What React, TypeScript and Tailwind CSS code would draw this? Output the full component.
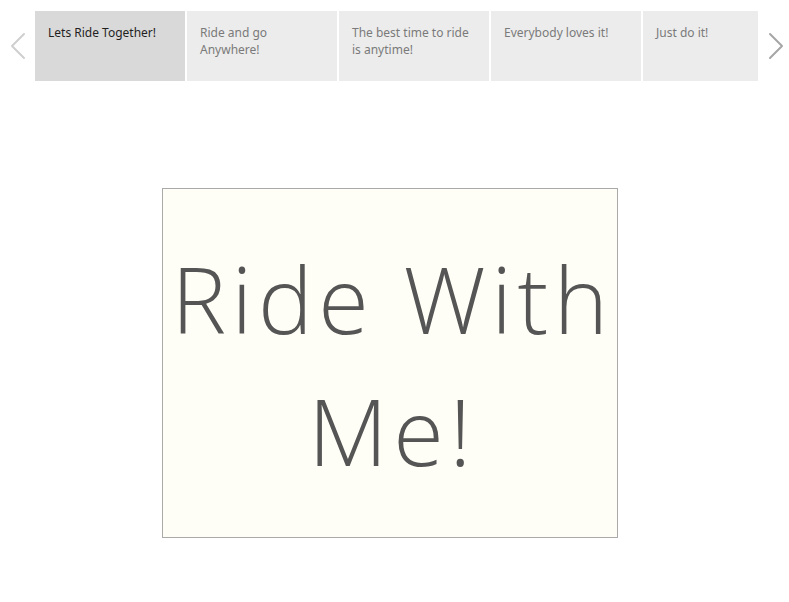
import { ChevronLeft, ChevronRight } from "lucide-react"

const storyPoints = [
  "Lets Ride Together!",
  "Ride and go Anywhere!",
  "The best time to ride is anytime!",
  "Everybody loves it!",
  "Just do it!",
]

export default function App() {
  return (
    <div className="h-[602px] w-[789px] overflow-hidden bg-white" style={{ fontFamily: '"Noto Sans", sans-serif' }}>
      <div className="mt-[11px] flex h-[70px] items-stretch">
        <div className="flex w-[35px] items-center justify-center">
          <ChevronLeft className="h-[48px] w-[48px] shrink-0 text-[#cfcfcf]" strokeWidth={1} />
        </div>
        <div className="flex w-[723px] gap-[2px] overflow-hidden">
          {storyPoints.map((label, index) => (
            <div
              key={label}
              className={
                index === 0
                  ? "w-[150px] shrink-0 bg-[#d9d9d9] px-[13px] pt-[13px] text-[12px] leading-[17px] text-[#1f1f1f]"
                  : "w-[150px] shrink-0 bg-[#ececec] px-[13px] pt-[13px] text-[12px] leading-[17px] text-[#7a7a7a]"
              }
            >
              {label}
            </div>
          ))}
        </div>
        <div className="flex w-[31px] items-center justify-center pl-[4px]">
          <ChevronRight className="h-[48px] w-[48px] shrink-0 text-[#a6a6a6]" strokeWidth={1} />
        </div>
      </div>
      <div className="ml-[162px] mt-[107px] flex h-[350px] w-[456px] flex-col items-center justify-center border border-[#aaaaaa] bg-[#fffef6]">
        <div
          className="pl-[5px] pt-[4px] text-center text-[92px] font-light leading-[132px] tracking-[5.5px] text-[#555555]"
          style={{ fontFamily: '"Open Sans", sans-serif' }}
        >
          Ride With
          <br />
          Me!
        </div>
      </div>
    </div>
  )
}
